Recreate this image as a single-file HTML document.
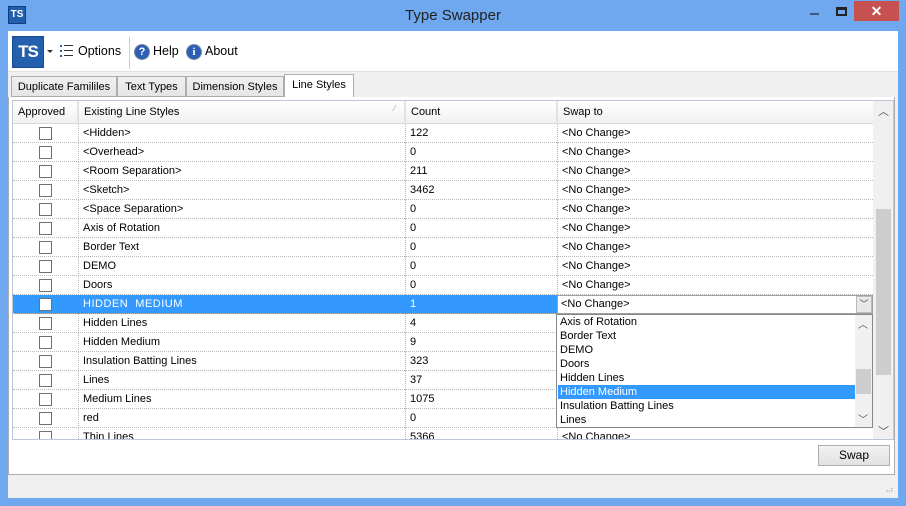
<!DOCTYPE html>
<html><head><style>
*{margin:0;padding:0;box-sizing:border-box}
body{width:906px;height:506px;background:#6fa8ee;font-family:"Liberation Sans",sans-serif;font-size:11px;color:#000;position:relative;overflow:hidden}
.a{position:absolute;white-space:nowrap}
.row{position:absolute;left:13px;width:860px;height:19px;border-bottom:1px dotted #b8b8b8}
.row span{position:absolute;top:3px;white-space:nowrap}
.cb{position:absolute;left:26px;top:3px;width:13px;height:13px;border:1px solid #707070;background:#fff}
.vl{position:absolute;top:0;height:19px;border-left:1px dotted #b8b8b8}
.tab{position:absolute;top:76px;height:21px;border:1px solid #adadad;background:linear-gradient(#f0f0f0,#e5e5e5);padding:4px 0 0;text-align:center;white-space:nowrap;overflow:hidden}
.li{position:absolute;left:558px;width:297px;height:14px;padding-left:2px;line-height:14px;white-space:nowrap}
</style></head><body>
<div class="a" style="left:8px;top:6px;width:18px;height:18px;background:#1f5fae;border:1px solid #0f3f80;color:#fff;font-weight:bold;font-size:10px;text-align:center;line-height:16px">TS</div>
<div class="a" style="left:0;top:7px;width:906px;text-align:center;font-size:15px;color:#222">Type Swapper</div>
<div class="a" style="left:810px;top:13px;width:9px;height:2px;background:#3a5a80"></div>
<div class="a" style="left:836px;top:7px;width:11px;height:9px;border:2px solid #222;border-top-width:3px"></div>
<div class="a" style="left:854px;top:1px;width:45px;height:20px;background:#c75050;color:#fff;text-align:center;font-size:14px;line-height:20px;font-weight:bold">✕</div>
<div class="a" style="left:8px;top:31px;width:890px;height:467px;background:#f0f0f0"></div>
<div class="a" style="left:8px;top:31px;width:890px;height:41px;background:#fff;border-bottom:1px solid #e0e0e0"></div>
<div class="a" style="left:12px;top:36px;width:32px;height:32px;background:#2460ad;border:1px solid #174a8f;color:#fff;font-weight:bold;font-size:17px;text-align:center;line-height:30px;letter-spacing:-1px">TS</div>
<div class="a" style="left:47px;top:50px;width:0;height:0;border-left:3px solid transparent;border-right:3px solid transparent;border-top:3px solid #333"></div>
<svg class="a" style="left:60px;top:44px" width="14" height="14"><g fill="#2e5fa8"><rect x="0" y="1" width="2" height="2"/><rect x="0" y="6" width="2" height="2"/><rect x="0" y="11" width="2" height="2"/></g><g fill="#333"><rect x="4" y="1" width="9" height="1"/><rect x="4" y="6" width="9" height="1"/><rect x="4" y="11" width="9" height="1"/></g></svg>
<div class="a" style="left:78px;top:44px;font-size:12.5px">Options</div>
<div class="a" style="left:129px;top:37px;width:1px;height:32px;background:#ccc"></div>
<div class="a" style="left:134px;top:44px;width:16px;height:16px;border-radius:50%;background:#2d5fb5;border:1px solid #7a8aa0;color:#fff;font-weight:bold;font-size:11px;text-align:center;line-height:14px">?</div>
<div class="a" style="left:153px;top:44px;font-size:12.5px">Help</div>
<div class="a" style="left:186px;top:44px;width:16px;height:16px;border-radius:50%;background:#2d5fb5;border:1px solid #7a8aa0;color:#fff;font-weight:bold;font-size:11px;text-align:center;line-height:14px;font-family:'Liberation Serif',serif">i</div>
<div class="a" style="left:205px;top:44px;font-size:12.5px">About</div>
<div class="tab" style="left:11px;width:106px">Duplicate Famililes</div>
<div class="tab" style="left:117px;width:69px">Text Types</div>
<div class="tab" style="left:186px;width:98px">Dimension Styles</div>
<div class="a" style="left:284px;top:74px;width:70px;height:25px;background:#fff;border:1px solid #adadad;border-bottom:none;padding:4px 0 0;text-align:center">Line Styles</div>
<div class="a" style="left:8px;top:97px;width:887px;height:378px;background:#fff;border:1px solid #adadad;border-top:none"></div>
<div class="a" style="left:285px;top:97px;width:68px;height:2px;background:#fff"></div>
<div class="a" style="left:12px;top:100px;width:882px;height:340px;border:1px solid #bcc8d6;background:#fff"></div>
<div class="a" style="left:13px;top:101px;width:860px;height:23px;background:linear-gradient(#fff,#f1f1f1);border-bottom:1px solid #d8d8d8"></div>
<div class="a" style="left:77px;top:101px;width:2px;height:23px;background:#e2e2e2"></div>
<div class="a" style="left:404px;top:101px;width:2px;height:23px;background:#e2e2e2"></div>
<div class="a" style="left:556px;top:101px;width:2px;height:23px;background:#e2e2e2"></div>
<div class="a" style="left:18px;top:106px">Approved</div>
<div class="a" style="left:84px;top:106px">Existing Line Styles</div>
<div class="a" style="left:394px;top:104px;font-size:8px;color:#999">⁄</div>
<div class="a" style="left:411px;top:106px">Count</div>
<div class="a" style="left:563px;top:106px">Swap to</div>
<div class="a" style="left:873px;top:101px;width:20px;height:338px;background:#f0f0f0"></div>
<div class="a" style="left:876px;top:209px;width:15px;height:166px;background:#cdcdcd"></div>
<div class="a" style="left:878px;top:103px;color:#555;font-size:11px">︿</div>
<div class="a" style="left:878px;top:423px;color:#555;font-size:11px">﹀</div>
<div class="a" style="left:13px;top:124px;width:860px;height:315px;overflow:hidden">
<div style="position:relative;left:-13px;top:-124px">
<div class="row" style="top:124px"><div class="cb"></div><div class="vl" style="left:65px"></div><div class="vl" style="left:392px"></div><div class="vl" style="left:544px"></div><span style="left:70px">&lt;Hidden&gt;</span><span style="left:397px">122</span><span style="left:549px">&lt;No Change&gt;</span></div>
<div class="row" style="top:143px"><div class="cb"></div><div class="vl" style="left:65px"></div><div class="vl" style="left:392px"></div><div class="vl" style="left:544px"></div><span style="left:70px">&lt;Overhead&gt;</span><span style="left:397px">0</span><span style="left:549px">&lt;No Change&gt;</span></div>
<div class="row" style="top:162px"><div class="cb"></div><div class="vl" style="left:65px"></div><div class="vl" style="left:392px"></div><div class="vl" style="left:544px"></div><span style="left:70px">&lt;Room Separation&gt;</span><span style="left:397px">211</span><span style="left:549px">&lt;No Change&gt;</span></div>
<div class="row" style="top:181px"><div class="cb"></div><div class="vl" style="left:65px"></div><div class="vl" style="left:392px"></div><div class="vl" style="left:544px"></div><span style="left:70px">&lt;Sketch&gt;</span><span style="left:397px">3462</span><span style="left:549px">&lt;No Change&gt;</span></div>
<div class="row" style="top:200px"><div class="cb"></div><div class="vl" style="left:65px"></div><div class="vl" style="left:392px"></div><div class="vl" style="left:544px"></div><span style="left:70px">&lt;Space Separation&gt;</span><span style="left:397px">0</span><span style="left:549px">&lt;No Change&gt;</span></div>
<div class="row" style="top:219px"><div class="cb"></div><div class="vl" style="left:65px"></div><div class="vl" style="left:392px"></div><div class="vl" style="left:544px"></div><span style="left:70px">Axis of Rotation</span><span style="left:397px">0</span><span style="left:549px">&lt;No Change&gt;</span></div>
<div class="row" style="top:238px"><div class="cb"></div><div class="vl" style="left:65px"></div><div class="vl" style="left:392px"></div><div class="vl" style="left:544px"></div><span style="left:70px">Border Text</span><span style="left:397px">0</span><span style="left:549px">&lt;No Change&gt;</span></div>
<div class="row" style="top:257px"><div class="cb"></div><div class="vl" style="left:65px"></div><div class="vl" style="left:392px"></div><div class="vl" style="left:544px"></div><span style="left:70px">DEMO</span><span style="left:397px">0</span><span style="left:549px">&lt;No Change&gt;</span></div>
<div class="row" style="top:276px"><div class="cb"></div><div class="vl" style="left:65px"></div><div class="vl" style="left:392px"></div><div class="vl" style="left:544px"></div><span style="left:70px">Doors</span><span style="left:397px">0</span><span style="left:549px">&lt;No Change&gt;</span></div>
<div class="row" style="top:295px;background:#3399ff;color:#fff"><div class="cb"></div><span style="left:70px;letter-spacing:0.5px">HIDDEN&nbsp; MEDIUM</span><span style="left:397px">1</span></div>
<div class="row" style="top:314px"><div class="cb"></div><div class="vl" style="left:65px"></div><div class="vl" style="left:392px"></div><span style="left:70px">Hidden Lines</span><span style="left:397px">4</span></div>
<div class="row" style="top:333px"><div class="cb"></div><div class="vl" style="left:65px"></div><div class="vl" style="left:392px"></div><span style="left:70px">Hidden Medium</span><span style="left:397px">9</span></div>
<div class="row" style="top:352px"><div class="cb"></div><div class="vl" style="left:65px"></div><div class="vl" style="left:392px"></div><span style="left:70px">Insulation Batting Lines</span><span style="left:397px">323</span></div>
<div class="row" style="top:371px"><div class="cb"></div><div class="vl" style="left:65px"></div><div class="vl" style="left:392px"></div><span style="left:70px">Lines</span><span style="left:397px">37</span></div>
<div class="row" style="top:390px"><div class="cb"></div><div class="vl" style="left:65px"></div><div class="vl" style="left:392px"></div><span style="left:70px">Medium Lines</span><span style="left:397px">1075</span></div>
<div class="row" style="top:409px"><div class="cb"></div><div class="vl" style="left:65px"></div><div class="vl" style="left:392px"></div><span style="left:70px">red</span><span style="left:397px">0</span></div>
<div class="row" style="top:428px"><div class="cb"></div><div class="vl" style="left:65px"></div><div class="vl" style="left:392px"></div><div class="vl" style="left:544px"></div><span style="left:70px">Thin Lines</span><span style="left:397px">5366</span><span style="left:549px">&lt;No Change&gt;</span></div>
</div></div>
<div class="a" style="left:557px;top:295px;width:316px;height:19px;background:#fff;border:1px solid #a0a0a0;padding:2px 0 0 3px">&lt;No Change&gt;</div>
<div class="a" style="left:856px;top:296px;width:16px;height:17px;background:#e8e8e8;border:1px solid #bbb;text-align:center;font-size:9px;color:#444;line-height:15px">﹀</div>
<div class="a" style="left:556px;top:314px;width:317px;height:114px;background:#fff;border:1px solid #828790"></div>
<div class="li" style="top:315px">Axis of Rotation</div>
<div class="li" style="top:329px">Border Text</div>
<div class="li" style="top:343px">DEMO</div>
<div class="li" style="top:357px">Doors</div>
<div class="li" style="top:371px">Hidden Lines</div>
<div class="li" style="top:385px;background:#3399ff;color:#fff">Hidden Medium</div>
<div class="li" style="top:399px">Insulation Batting Lines</div>
<div class="li" style="top:413px">Lines</div>
<div class="a" style="left:855px;top:315px;width:17px;height:112px;background:#f0f0f0"></div>
<div class="a" style="left:856px;top:369px;width:15px;height:25px;background:#cdcdcd"></div>
<div class="a" style="left:858px;top:316px;color:#555;font-size:10px">︿</div>
<div class="a" style="left:858px;top:411px;color:#555;font-size:10px">﹀</div>
<div class="a" style="left:818px;top:445px;width:72px;height:21px;background:linear-gradient(#f2f2f2,#e2e2e2);border:1px solid #adadad;text-align:center;line-height:19px;font-size:12px">Swap</div>
<div class="a" style="left:883px;top:485px;color:#999;font-size:8px;letter-spacing:-1px">⠠⠴</div>
</body></html>
